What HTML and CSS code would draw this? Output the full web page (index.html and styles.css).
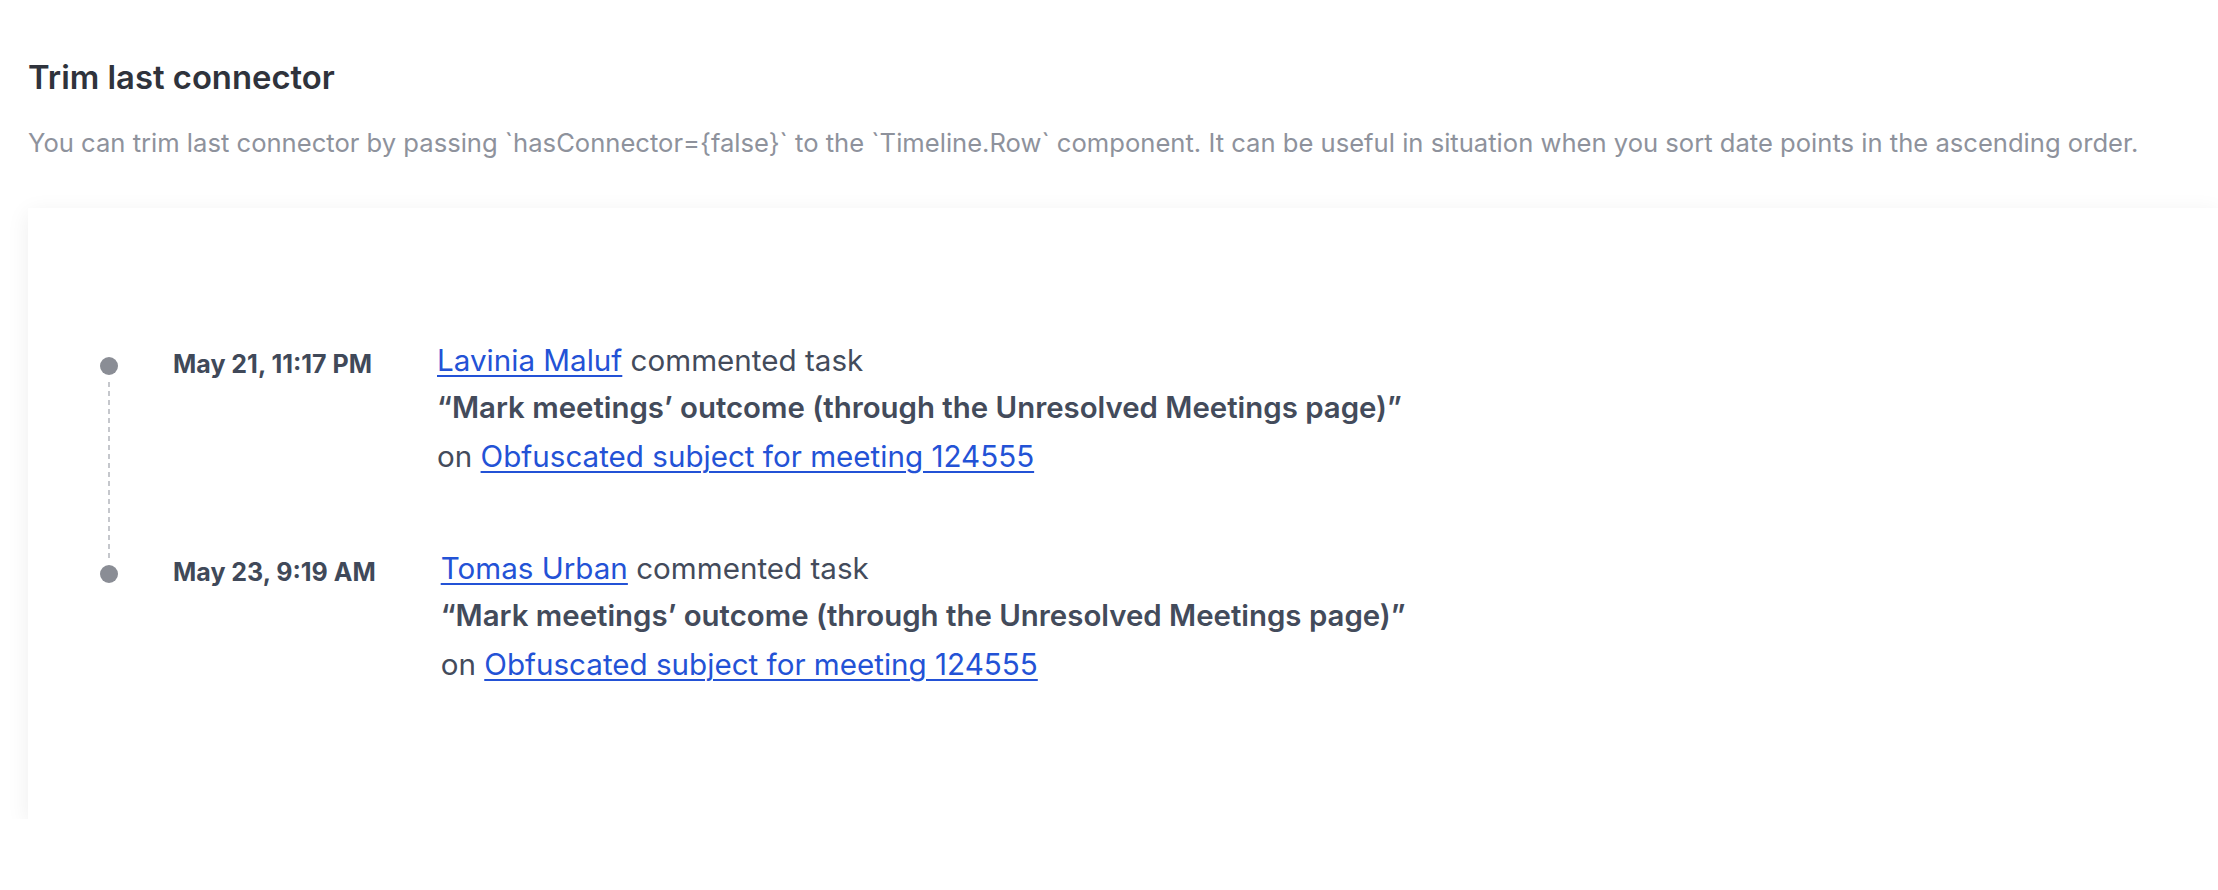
FILE: index.html
```html
<!DOCTYPE html>
<html lang="en">
<head>
<meta charset="utf-8">
<title>Trim last connector</title>
<link rel="stylesheet" href="styles.css">
</head>
<body>
<main class="page">
  <h2 class="title">Trim last connector</h2>
  <p class="desc">You can trim last connector by passing `hasConnector={false}` to the `Timeline.Row` component. It can be useful in situation when you sort date points in the ascending order.</p>
  <section class="card">
    <div class="timeline">
      <div class="row">
        <div class="marker">
          <span class="dot"></span>
          <span class="connector"></span>
        </div>
        <div class="date">May 21, 11:17 PM</div>
        <div class="content">
          <div class="line"><a href="#" class="link">Lavinia Maluf</a> commented task</div>
          <div class="line strong">“Mark meetings’ outcome (through the Unresolved Meetings page)”</div>
          <div class="line">on <a href="#" class="link">Obfuscated subject for meeting 124555</a></div>
        </div>
      </div>
      <div class="row row-last">
        <div class="marker">
          <span class="dot"></span>
        </div>
        <div class="date">May 23, 9:19 AM</div>
        <div class="content">
          <div class="line"><a href="#" class="link">Tomas Urban</a> commented task</div>
          <div class="line strong">“Mark meetings’ outcome (through the Unresolved Meetings page)”</div>
          <div class="line">on <a href="#" class="link">Obfuscated subject for meeting 124555</a></div>
        </div>
      </div>
    </div>
  </section>
</main>
</body>
</html>
```
FILE: styles.css
```css
html, body {
  margin: 0;
  padding: 0;
  background: #ffffff;
}

body {
  font-family: Inter, "Noto Sans", sans-serif;
  color: #434b5b;
  overflow: hidden;
}

.page {
  padding: 57px 0 0 28px;
}

.title {
  margin: 0;
  font-size: 32.8px;
  line-height: 40px;
  font-weight: 600;
  color: #2f333c;
}

.desc {
  margin: 28px 0 0;
  font-size: 25.6px;
  line-height: 36px;
  font-weight: 400;
  color: #8e929c;
}

.card {
  margin-top: 47px;
  background: #ffffff;
  box-shadow: 0 5px 22px rgba(0, 0, 0, 0.07);
  padding: 128px 0 131px 72px;
}

.timeline {
  display: flex;
  flex-direction: column;
}

.row {
  display: flex;
  align-items: flex-start;
}

.marker {
  align-self: stretch;
  width: 18px;
  display: flex;
  flex-direction: column;
  align-items: center;
  padding-top: 20.5px;
}

.dot {
  width: 18px;
  height: 18px;
  border-radius: 50%;
  background: #8a8d95;
  flex: none;
}

.connector {
  flex: 1;
  width: 2px;
  margin-top: 7.5px;
  margin-bottom: -13.5px;
  background: repeating-linear-gradient(to bottom, #c5c7cc 0 5px, transparent 5px 9px);
}

.date {
  margin-left: 55px;
  font-size: 25px;
  line-height: 56px;
  font-weight: 700;
  color: #404959;
  white-space: nowrap;
}

.content {
  margin-left: 65px;
  margin-bottom: 64px;
  font-size: 29.6px;
  line-height: 48px;
  color: #434b5b;
}

.row-last .content {
  margin-bottom: 0;
}

.line {
  white-space: nowrap;
}

.strong {
  font-weight: 600;
  font-size: 29.4px;
}

.link {
  color: #2352d6;
  text-decoration: underline;
  text-decoration-thickness: 2px;
  text-underline-offset: 4px;
}
```
